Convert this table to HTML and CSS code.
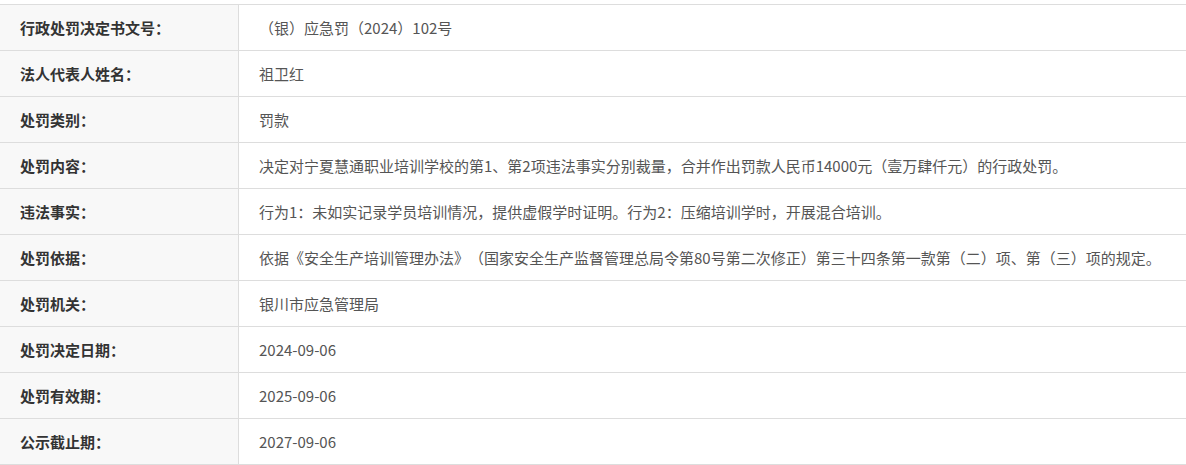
FILE: index.html
```html
<!DOCTYPE html>
<html lang="zh-CN">
    <head>
        <meta charset="utf-8">
        <title>行政处罚信息</title>
        <link rel="stylesheet" href="styles.css">
    </head>
    <body>
        <table class="infoTable">
            <tr>
                <th>行政处罚决定书文号：</th>
                <td>（银）应急罚（2024）102号</td>
            </tr>
            <tr>
                <th>法人代表人姓名：</th>
                <td>祖卫红</td>
            </tr>
            <tr>
                <th>处罚类别：</th>
                <td>罚款</td>
            </tr>
            <tr>
                <th>处罚内容：</th>
                <td>决定对宁夏慧通职业培训学校的第1、第2项违法事实分别裁量，合并作出罚款人民币14000元（壹万肆仟元）的行政处罚。</td>
            </tr>
            <tr>
                <th>违法事实：</th>
                <td>行为1：未如实记录学员培训情况，提供虚假学时证明。行为2：压缩培训学时，开展混合培训。</td>
            </tr>
            <tr>
                <th>处罚依据：</th>
                <td>依据《安全生产培训管理办法》（国家安全生产监督管理总局令第80号第二次修正）第三十四条第一款第（二）项、第（三）项的规定。</td>
            </tr>
            <tr>
                <th>处罚机关：</th>
                <td>银川市应急管理局</td>
            </tr>
            <tr>
                <th>处罚决定日期：</th>
                <td>2024-09-06</td>
            </tr>
            <tr>
                <th>处罚有效期：</th>
                <td>2025-09-06</td>
            </tr>
            <tr>
                <th>公示截止期：</th>
                <td>2027-09-06</td>
            </tr>
        </table>
    </body>
</html>
```

FILE: styles.css
```css
body {
    margin: 0;
    padding-top: 4px;
    background: #ffffff;
    font-family: "Noto Sans CJK SC", "Noto Sans", sans-serif;
    font-size: 15px;
    text-spacing-trim: space-all;
}

.infoTable {
    width: 100%;
    border-collapse: collapse;
}

.infoTable tr {
    height: 46px;
}

.infoTable th,
.infoTable td {
    border-top: 1px solid #dddddd;
    border-bottom: 1px solid #dddddd;
    padding: 0;
    vertical-align: middle;
    text-align: left;
    line-height: 20px;
}

.infoTable th {
    width: 218px;
    padding-left: 20px;
    background: #f8f8f8;
    color: #333333;
    font-weight: bold;
    border-right: 1px solid #dddddd;
}

.infoTable td {
    padding-left: 20px;
    color: #555555;
}
```
